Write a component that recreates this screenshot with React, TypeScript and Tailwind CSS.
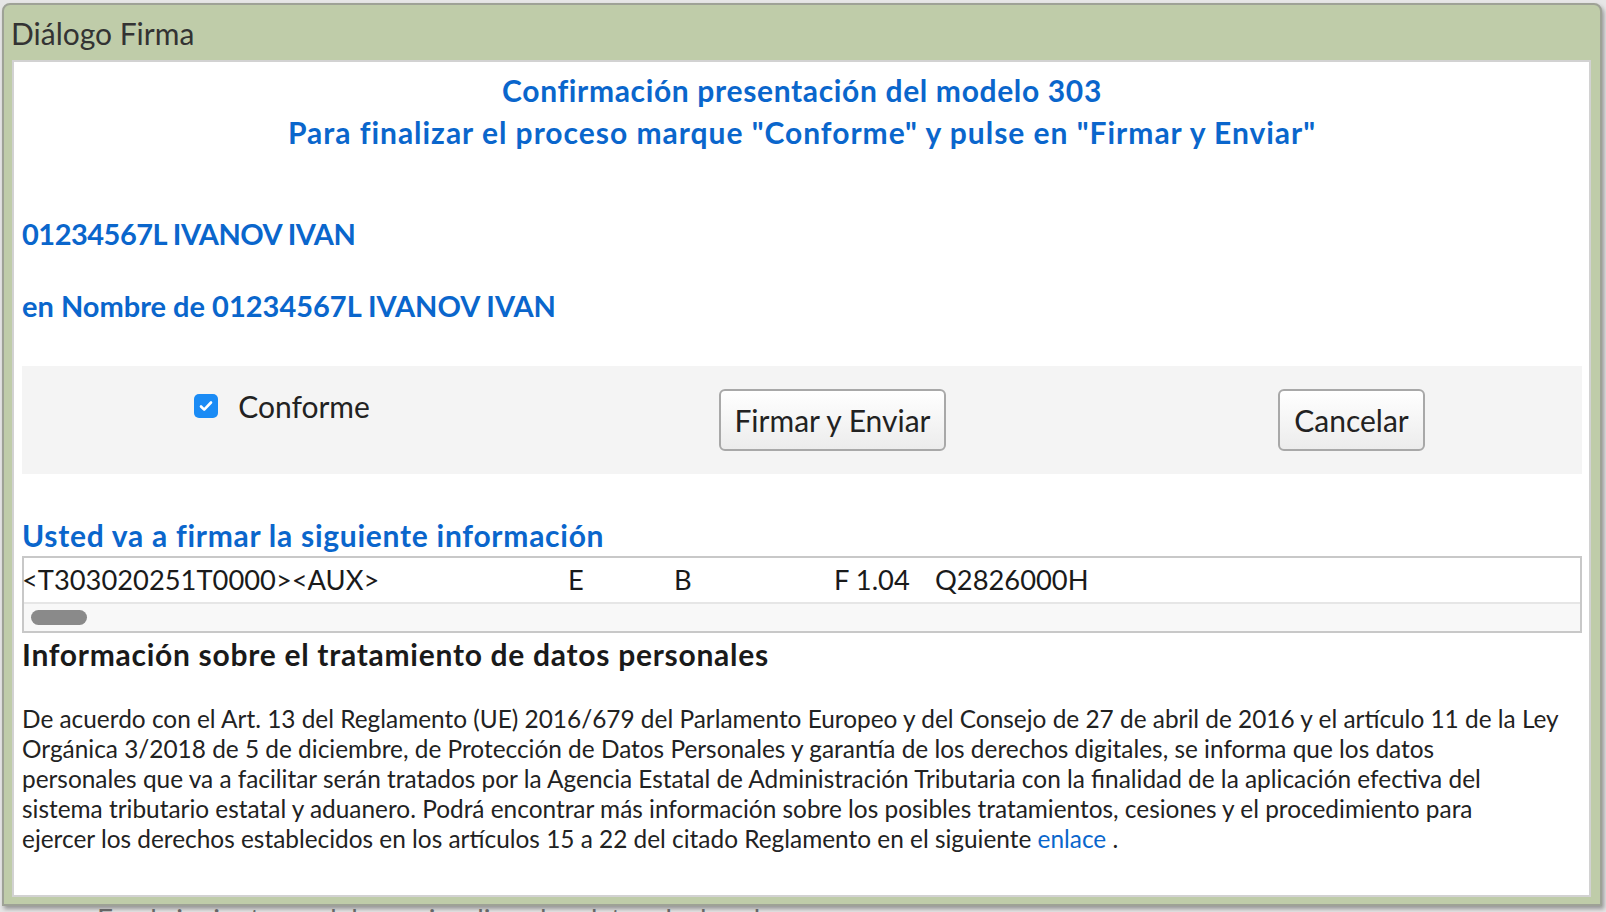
import React from "react";

const FONT = { fontFamily: "Lato, 'Open Sans', 'Liberation Sans', sans-serif" };

function Check() {
  return (
    <span className="flex h-[24px] w-[24px] shrink-0 items-center justify-center rounded-[5px] bg-[#1a8bf5]">
      <svg width="16" height="16" viewBox="0 0 16 16" fill="none">
        <path d="M3 8.5l3.2 3.2L13 4.5" stroke="#fff" strokeWidth="2.6" strokeLinecap="round" strokeLinejoin="round" />
      </svg>
    </span>
  );
}

export default function App() {
  return (
    <div className="relative h-[912px] w-[1606px] overflow-hidden bg-[#e6e6e6]" style={FONT}>
      <div className="ml-[2px] mt-[3px] flex h-[903px] w-[1600px] flex-col rounded-t-[8px] border-2 border-[#9ea296] bg-[#bfcca9] shadow-[2px_3px_4px_rgba(0,0,0,0.35)]">
        <div className="flex h-[55px] items-center pl-[7px] text-[30px] leading-none text-[#333]">
          Diálogo Firma
        </div>
        <div className="mb-[7px] ml-[8px] mr-[9px] flex flex-1 flex-col border-2 border-[#d2d2d2] bg-white pl-[8px] pr-[7px]">
          <div className="mt-[7px] flex flex-col items-center text-[30px] font-bold leading-[42px] text-[#0a66cc]">
            <div className="tracking-[0.65px]">Confirmación presentación del modelo 303</div>
            <div className="tracking-[0.98px]">Para finalizar el proceso marque "Conforme" y pulse en "Firmar y Enviar"</div>
          </div>
          <div className="mt-[63px] text-[29px] font-bold leading-[36px] tracking-[-0.5px] text-[#0a66cc]">01234567L IVANOV IVAN</div>
          <div className="mt-[36px] text-[29px] font-bold leading-[36px] text-[#0a66cc]">en Nombre de 01234567L IVANOV IVAN</div>
          <div className="mt-[42px] grid h-[108px] grid-cols-3 bg-[#f4f4f4] py-[23px]">
            <div className="flex items-start justify-center pt-[5px]">
              <label className="flex items-center gap-[20px] text-[30px] leading-[24px] text-[#222]">
                <Check />
                <span>Conforme</span>
              </label>
            </div>
            <div className="flex justify-center">
              <button className="ml-[61px] h-[62px] rounded-[6px] border-2 border-[#a8a8a8] bg-gradient-to-b from-[#ffffff] to-[#ececec] px-[13px] text-[30px] text-[#222]">
                Firmar y Enviar
              </button>
            </div>
            <div className="flex justify-center">
              <button className="ml-[59px] h-[62px] rounded-[6px] border-2 border-[#a8a8a8] bg-gradient-to-b from-[#ffffff] to-[#ececec] px-[14px] text-[30px] text-[#222]">
                Cancelar
              </button>
            </div>
          </div>
          <div className="mt-[43px] text-[30px] font-bold leading-[36px] tracking-[0.73px] text-[#0a66cc]">Usted va a firmar la siguiente información</div>
          <div className="mt-[3px] flex h-[77px] flex-col border-2 border-[#c8c8c8]">
            <div className="flex h-[44px] items-center whitespace-nowrap text-[27.3px] text-[#1a1a1a]">
              <span className="ml-[-2px] w-[546px]">&lt;T303020251T0000&gt;&lt;AUX&gt;</span>
              <span className="w-[106px]">E</span>
              <span className="w-[160px]">B</span>
              <span className="w-[101px]">F 1.04</span>
              <span>Q2826000H</span>
            </div>
            <div className="flex flex-1 items-center border-t-2 border-[#e6e6e6] bg-[#f8f8f8] pl-[7px]">
              <div className="h-[15px] w-[56px] rounded-full bg-[#8a8a8a]" />
            </div>
          </div>
          <div className="mt-[3px] text-[30px] font-bold leading-[36px] tracking-[0.72px] text-[#1a1a1a]">Información sobre el tratamiento de datos personales</div>
          <div className="mt-[32px] whitespace-nowrap text-[24.4px] leading-[30px] text-[#222]">
            <div>De acuerdo con el Art. 13 del Reglamento (UE) 2016/679 del Parlamento Europeo y del Consejo de 27 de abril de 2016 y el artículo 11 de la Ley</div>
            <div>Orgánica 3/2018 de 5 de diciembre, de Protección de Datos Personales y garantía de los derechos digitales, se informa que los datos</div>
            <div>personales que va a facilitar serán tratados por la Agencia Estatal de Administración Tributaria con la finalidad de la aplicación efectiva del</div>
            <div>sistema tributario estatal y aduanero. Podrá encontrar más información sobre los posibles tratamientos, cesiones y el procedimiento para</div>
            <div>
              ejercer los derechos establecidos en los artículos 15 a 22 del citado Reglamento en el siguiente{" "}
              <a className="text-[#0a66cc]">enlace</a> .
            </div>
          </div>
        </div>
      </div>
      <div className="ml-[97px] mt-[-1px] whitespace-nowrap text-[28px] leading-[28px] text-[#666]">
        En el siguiente modelo se visualizan los datos declarados
      </div>
    </div>
  );
}
